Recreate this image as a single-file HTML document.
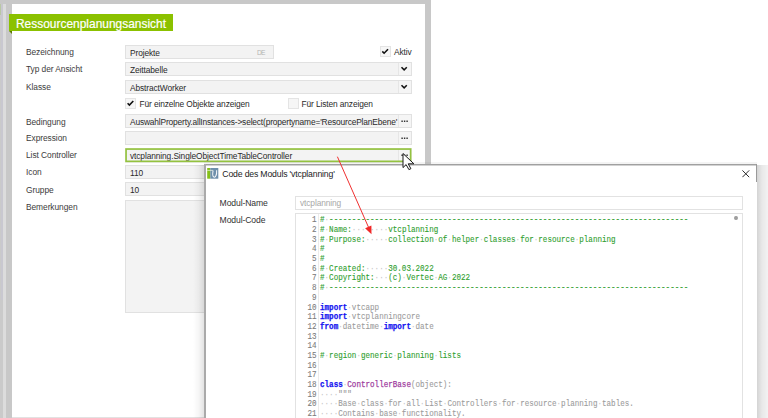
<!DOCTYPE html>
<html><head><meta charset="utf-8">
<style>
html,body{margin:0;padding:0;width:768px;height:418px;overflow:hidden;background:#fff;position:relative;font-family:"Liberation Sans",sans-serif;}
.a{position:absolute;}
.lbl{position:absolute;left:26px;font-size:8.4px;letter-spacing:-0.06px;color:#3c3c3c;white-space:pre;line-height:10px;}
.fld{position:absolute;left:125px;background:#f3f3f3;border:1px solid #e1e1e1;box-sizing:border-box;height:14px;width:287px}
.ft{position:absolute;left:4px;top:1.5px;font-size:8.4px;letter-spacing:-0.11px;color:#2a2a2a;white-space:pre;line-height:10px;}
.btn{position:absolute;right:0;top:0;bottom:0;width:13px;border-left:1px solid #e6e6e6;box-sizing:border-box;background:#f5f5f5}
.cb{position:absolute;width:11px;height:11px;background:#f6f6f6;border:1px solid #e4e4e4;box-sizing:border-box;}
.tx{position:absolute;font-size:8.4px;letter-spacing:-0.12px;color:#2a2a2a;line-height:10px;white-space:pre}
.ln{position:absolute;left:23.9px;margin-top:2.35px;font-family:"Liberation Mono",monospace;font-size:8.8px;line-height:9.7px;white-space:pre;height:9.7px;transform:scaleX(0.8614);transform-origin:0 0;-webkit-text-stroke:0.25px}
.ln i{font-style:normal;color:#c4c4c4;-webkit-text-stroke:0}
.ln .n{position:absolute;right:calc(100% + 4px);font-weight:normal;color:#7c7c7c;-webkit-text-stroke:0.1px}
.c{color:#30a030;-webkit-text-stroke:0.12px}
.k{color:#1414f0;font-weight:bold}
.g{color:#9c9c9c;-webkit-text-stroke:0.1px}
.p{color:#a040a0}
</style></head><body>
<!-- left strips -->
<div class="a" style="left:0;top:0;width:3px;height:418px;background:#cacaca"></div>
<div class="a" style="left:0;top:0;width:1px;height:15px;background:#b9c8a4"></div>
<div class="a" style="left:1px;top:0;width:2px;height:300px;background:#c9c8d0"></div>
<div class="a" style="left:3px;top:0;width:3px;height:418px;background:#dcdcdc"></div>
<div class="a" style="left:6px;top:0;width:6px;height:418px;background:#c8c8c8"></div>
<!-- top band -->
<div class="a" style="left:0;top:0;width:431px;height:4px;background:#c8c8c8"></div>
<div class="a" style="left:425px;top:0;width:6px;height:418px;background:#c8c8c8"></div>
<div class="a" style="left:12px;top:417px;width:194px;height:1px;background:#e2e2e2"></div>

<!-- banner -->
<div class="a" style="left:9px;top:14px;width:164px;height:17px;background:#8bc100"></div>
<div class="a" style="left:9px;top:31px;width:0;height:0;border-top:3px solid #5b7d00;border-left:3px solid transparent"></div>
<div class="a" style="left:16px;top:17.3px;font-size:11.95px;color:#fff;-webkit-text-stroke:0.2px #fff;white-space:pre;line-height:14px">Ressourcenplanungsansicht</div>

<!-- labels -->
<div class="lbl" style="top:46.8px">Bezeichnung</div>
<div class="lbl" style="top:63.8px">Typ der Ansicht</div>
<div class="lbl" style="top:82.2px">Klasse</div>
<div class="lbl" style="top:116.8px">Bedingung</div>
<div class="lbl" style="top:133.1px">Expression</div>
<div class="lbl" style="top:150.2px">List Controller</div>
<div class="lbl" style="top:167.0px">Icon</div>
<div class="lbl" style="top:184.6px">Gruppe</div>
<div class="lbl" style="top:201.9px">Bemerkungen</div>

<!-- fields -->
<div class="fld" style="top:45px;width:149px"><div class="ft">Projekte</div><div class="a" style="left:131px;top:2.7px;font-size:6.7px;letter-spacing:-0.8px;color:#b4b4b4;line-height:8px">DE</div></div>
<div class="cb" style="left:379.5px;top:46px"></div>
<svg class="a" style="left:379.5px;top:46px" width="11" height="11" viewBox="0 0 11 11"><path d="M2.3 5.4L4.1 7.2L8.0 3.2" fill="none" stroke="#111" stroke-width="1.6"/></svg>
<div class="tx" style="left:394px;top:47.2px">Aktiv</div>

<div class="fld" style="top:62px"><div class="ft">Zeittabelle</div><div class="btn"><svg class="a" style="left:1px;top:3px" width="9" height="6" viewBox="0 0 9 6"><path d="M1.5 1.2L4.15 3.9L6.8 1.2" fill="none" stroke="#111" stroke-width="1.5"/></svg></div></div>
<div class="fld" style="top:80px"><div class="ft">AbstractWorker</div><div class="btn"><svg class="a" style="left:1px;top:3px" width="9" height="6" viewBox="0 0 9 6"><path d="M1.5 1.2L4.15 3.9L6.8 1.2" fill="none" stroke="#111" stroke-width="1.5"/></svg></div></div>

<div class="cb" style="left:125px;top:98px"></div>
<svg class="a" style="left:125px;top:98px" width="11" height="11" viewBox="0 0 11 11"><path d="M2.6 5.2L4.4 7L8.3 3" fill="none" stroke="#111" stroke-width="1.6"/></svg>
<div class="tx" style="left:139.5px;top:99.2px">Für einzelne Objekte anzeigen</div>
<div class="cb" style="left:287.5px;top:98px"></div>
<div class="tx" style="left:301.5px;top:99.2px">Für Listen anzeigen</div>

<div class="fld" style="top:114px;overflow:hidden"><div class="ft" style="letter-spacing:-0.16px">AuswahlProperty.allInstances-&gt;select(propertyname='ResourcePlanEbene'</div><div class="btn"><svg class="a" style="left:1.3px;top:5px" width="9" height="3" viewBox="0 0 9 3"><path d="M1.4 0.6h1.4v1.4h-1.4zM3.9 0.6h1.4v1.4h-1.4zM6.4 0.6h1.4v1.4h-1.4z" fill="#333"/></svg></div></div>
<div class="fld" style="top:131px"><div class="btn"><svg class="a" style="left:1.3px;top:5px" width="9" height="3" viewBox="0 0 9 3"><path d="M1.4 0.6h1.4v1.4h-1.4zM3.9 0.6h1.4v1.4h-1.4zM6.4 0.6h1.4v1.4h-1.4z" fill="#333"/></svg></div></div>
<div class="fld" style="top:148px;height:14.5px;border:1px solid #f2f2f2"><div class="ft" style="top:1.6px">vtcplanning.SingleObjectTimeTableController</div><div class="btn" style="border-left-color:#e6e6e6"><svg class="a" style="left:1.3px;top:5.2px" width="9" height="3" viewBox="0 0 9 3"><path d="M1.4 0.6h1.4v1.4h-1.4zM3.9 0.6h1.4v1.4h-1.4zM6.4 0.6h1.4v1.4h-1.4z" fill="#333"/></svg></div></div>
<svg class="a" style="left:125px;top:148px" width="288" height="16" viewBox="0 0 288 16"><rect x="1.05" y="1.05" width="284.6" height="12.3" fill="none" stroke="#94c240" stroke-width="1.7"/></svg>
<div class="fld" style="top:165px"><div class="ft">110</div></div>
<div class="fld" style="top:182px"><div class="ft">10</div></div>
<div class="fld" style="top:200px;height:112.5px"></div>

<!-- cursor -->
<svg class="a" style="left:401px;top:152px;z-index:5" width="16" height="20" viewBox="0 0 16 20"><path d="M2 1.5V15.6L5.1 12.6L7.9 17.6L9.9 16.7L7.2 11.8H12.9Z" fill="#fff" stroke="#1a1a1a" stroke-width="1" stroke-linejoin="round"/></svg>

<!-- dialog -->
<div class="a" style="left:193px;top:165px;width:11px;height:253px;background:linear-gradient(to right,rgba(0,0,0,0),rgba(0,0,0,0.035) 50%,rgba(0,0,0,0.11))"></div>
<div class="a" style="left:757px;top:165px;width:11px;height:253px;background:linear-gradient(to right,rgba(0,0,0,0.17),rgba(0,0,0,0.09) 45%,rgba(0,0,0,0.05))"></div>
<div class="a" style="left:204px;top:164px;width:553px;height:254px;background:#fff"></div>
<div class="a" style="left:204px;top:162px;width:553px;height:2px;background:rgba(0,0,0,0.045)"></div>
<div class="a" style="left:204px;top:164px;width:553px;height:1px;background:#a0a0a0"></div>
<div class="a" style="left:204px;top:165px;width:553px;height:1px;background:#d2d2d2"></div>
<div class="a" style="left:204px;top:164px;width:1.7px;height:254px;background:#aaaaaa"></div>
<div class="a" style="left:756px;top:164px;width:1px;height:18px;background:#9a9a9a"></div>
<svg class="a" style="left:207px;top:168px" width="12" height="11" viewBox="0 0 12 11"><rect x="0.2" y="0" width="3.1" height="10.7" fill="#86c01a"/><rect x="3.3" y="0" width="8" height="10.7" fill="#6e8fab"/><path d="M0.2 2.4H6.2" stroke="#eef4e4" stroke-width="0.7"/><path d="M6.1 2.6C5.6 5 5.3 8.4 6.9 9.1C8.7 9.7 9.9 6.2 9.6 3.2C9.5 2.6 9.7 2.3 9.9 2.6" fill="none" stroke="#f4f6f8" stroke-width="1.05"/></svg>
<div class="a" style="left:222.3px;top:168.6px;font-size:8.7px;letter-spacing:-0.17px;color:#1c1c1c;white-space:pre;line-height:11px">Code des Moduls 'vtcplanning'</div>
<svg class="a" style="left:742px;top:170px" width="8" height="8" viewBox="0 0 8 8"><path d="M0.4 0.4L7.2 7.2M7.2 0.4L0.4 7.2" stroke="#2e2e2e" stroke-width="1"/></svg>
<div class="a" style="left:219.6px;top:198px;font-size:8.6px;letter-spacing:-0.1px;color:#333;white-space:pre;line-height:10px">Modul-Name</div>
<div class="a" style="left:219.6px;top:214.6px;font-size:8.6px;letter-spacing:-0.1px;color:#333;white-space:pre;line-height:10px">Modul-Code</div>
<div class="a" style="left:295px;top:195.5px;width:448px;height:14px;border:1px solid #e2e2e2;box-sizing:border-box;background:#fff"><div class="ft" style="color:#a8a8a8">vtcplanning</div></div>
<div class="a" id="code" style="left:295px;top:213px;width:448px;height:220px;border:1px solid #e2e2e2;box-sizing:border-box;background:#fff;overflow:hidden">
<div class="a" style="left:21.7px;top:0;width:1.5px;height:100%;background:#ebebeb"></div>
<div class="a" style="right:4.2px;top:1.8px;width:3.6px;height:4.2px;border-radius:50%;background:#9e9e9e"></div>
<div class="ln" style="top:0.00px"><b class="n">1</b><span class="c">#</span><i>·</i><span class="c">-------------------------------------------------------------------------------</span></div>
<div class="ln" style="top:9.68px"><b class="n">2</b><span class="c">#</span><i>·</i><span class="c">Name:</span><i>·</i><i>·</i><i>·</i><i>·</i><i>·</i><i>·</i><i>·</i><i>·</i><span class="c">vtcplanning</span></div>
<div class="ln" style="top:19.37px"><b class="n">3</b><span class="c">#</span><i>·</i><span class="c">Purpose:</span><i>·</i><i>·</i><i>·</i><i>·</i><i>·</i><span class="c">collection</span><i>·</i><span class="c">of</span><i>·</i><span class="c">helper</span><i>·</i><span class="c">classes</span><i>·</i><span class="c">for</span><i>·</i><span class="c">resource</span><i>·</i><span class="c">planning</span></div>
<div class="ln" style="top:29.05px"><b class="n">4</b><span class="c">#</span></div>
<div class="ln" style="top:38.74px"><b class="n">5</b><span class="c">#</span></div>
<div class="ln" style="top:48.42px"><b class="n">6</b><span class="c">#</span><i>·</i><span class="c">Created:</span><i>·</i><i>·</i><i>·</i><i>·</i><i>·</i><span class="c">30.03.2022</span></div>
<div class="ln" style="top:58.10px"><b class="n">7</b><span class="c">#</span><i>·</i><span class="c">Copyright:</span><i>·</i><i>·</i><i>·</i><span class="c">(c)</span><i>·</i><span class="c">Vertec</span><i>·</i><span class="c">AG</span><i>·</i><span class="c">2022</span></div>
<div class="ln" style="top:67.79px"><b class="n">8</b><span class="c">#</span><i>·</i><span class="c">-------------------------------------------------------------------------------</span></div>
<div class="ln" style="top:77.47px"><b class="n">9</b></div>
<div class="ln" style="top:87.16px"><b class="n">10</b><span class="k">import</span><i>·</i><span class="g">vtcapp</span></div>
<div class="ln" style="top:96.84px"><b class="n">11</b><span class="k">import</span><i>·</i><span class="g">vtcplanningcore</span></div>
<div class="ln" style="top:106.52px"><b class="n">12</b><span class="k">from</span><i>·</i><span class="g">datetime</span><i>·</i><span class="k">import</span><i>·</i><span class="g">date</span></div>
<div class="ln" style="top:116.21px"><b class="n">13</b></div>
<div class="ln" style="top:125.89px"><b class="n">14</b></div>
<div class="ln" style="top:135.58px"><b class="n">15</b><span class="c">#</span><i>·</i><span class="c">region</span><i>·</i><span class="c">generic</span><i>·</i><span class="c">planning</span><i>·</i><span class="c">lists</span></div>
<div class="ln" style="top:145.26px"><b class="n">16</b></div>
<div class="ln" style="top:154.94px"><b class="n">17</b></div>
<div class="ln" style="top:164.63px"><b class="n">18</b><span class="k">class</span><i>·</i><span class="p">ControllerBase</span><span class="g">(object):</span></div>
<div class="ln" style="top:174.31px"><b class="n">19</b><i>·</i><i>·</i><i>·</i><i>·</i><span class="g">&quot;&quot;&quot;</span></div>
<div class="ln" style="top:184.00px"><b class="n">20</b><i>·</i><i>·</i><i>·</i><i>·</i><span class="g">Base</span><i>·</i><span class="g">class</span><i>·</i><span class="g">for</span><i>·</i><span class="g">all</span><i>·</i><span class="g">List</span><i>·</i><span class="g">Controllers</span><i>·</i><span class="g">for</span><i>·</i><span class="g">resource</span><i>·</i><span class="g">planning</span><i>·</i><span class="g">tables.</span></div>
<div class="ln" style="top:193.68px"><b class="n">21</b><i>·</i><i>·</i><i>·</i><i>·</i><span class="g">Contains</span><i>·</i><span class="g">base</span><i>·</i><span class="g">functionality.</span></div>
<div class="ln" style="top:203.36px"><b class="n">22</b><i>·</i><i>·</i><i>·</i><i>·</i></div>
</div>
<!-- red arrow -->
<svg class="a" style="left:0;top:0;z-index:6" width="768" height="418" viewBox="0 0 768 418"><path d="M337.4 156.7L368.4 227" stroke="#f03030" stroke-width="1" fill="none"/><path d="M371.5 234.3L365.1 228.3L371.4 225.4Z" fill="#f02828"/></svg>
</body></html>
